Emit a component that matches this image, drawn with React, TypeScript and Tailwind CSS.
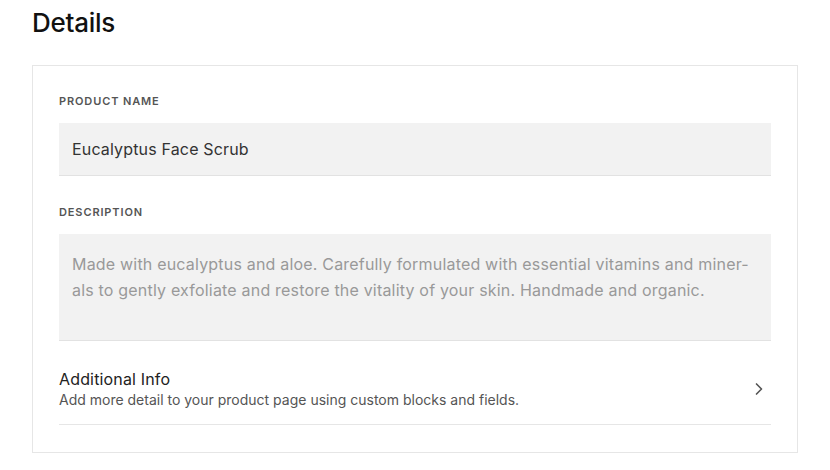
import { ChevronRight } from "lucide-react";

const FONT = { fontFamily: "Inter, 'Liberation Sans', sans-serif" };

function FieldLabel({ children }: { children: string }) {
  return (
    <div className="text-[11px] font-semibold uppercase tracking-[0.08em] text-[#555] leading-none">{children}</div>
  );
}

export default function App() {
  return (
    <div className="w-[830px] h-[470px] bg-white px-8 pt-[8px] overflow-hidden" style={FONT}>
      <h1 className="text-[26px] font-medium text-[#111] leading-[30px] tracking-[-0.01em]">Details</h1>

      <div className="mt-[27px] border border-[#e6e6e6] px-[26px] pt-[30px] pb-[27px]">
        <FieldLabel>Product Name</FieldLabel>
        <div className="mt-[16px] h-[53px] bg-[#f2f2f2] border-b border-[#e2e2e2] flex items-center px-[13px] text-[16px] tracking-[0.01em] text-[#333]">
          Eucalyptus Face Scrub
        </div>

        <div className="mt-[31px]">
          <FieldLabel>Description</FieldLabel>
        </div>
        <div className="mt-[16px] h-[107px] bg-[#f2f2f2] border-b border-[#e2e2e2] px-[13px] pt-[17px] text-[16px] leading-[26px] tracking-[0.012em] text-[#999]">
          Made with eucalyptus and aloe. Carefully formulated with essential vitamins and miner-
          <br />
          als to gently exfoliate and restore the vitality of your skin. Handmade and organic.
        </div>

        <div className="mt-[27px] flex items-center justify-between border-b border-[#e6e6e6] pb-[15px]">
          <div>
            <div className="text-[16px] text-[#222] leading-[22px] tracking-[0.01em]">Additional Info</div>
            <div className="text-[14px] text-[#555] leading-[18px] mt-[1px]">
              Add more detail to your product page using custom blocks and fields.
            </div>
          </div>
          <ChevronRight size={20} strokeWidth={2} className="text-[#555] mr-[2px]" />
        </div>
      </div>
    </div>
  );
}
